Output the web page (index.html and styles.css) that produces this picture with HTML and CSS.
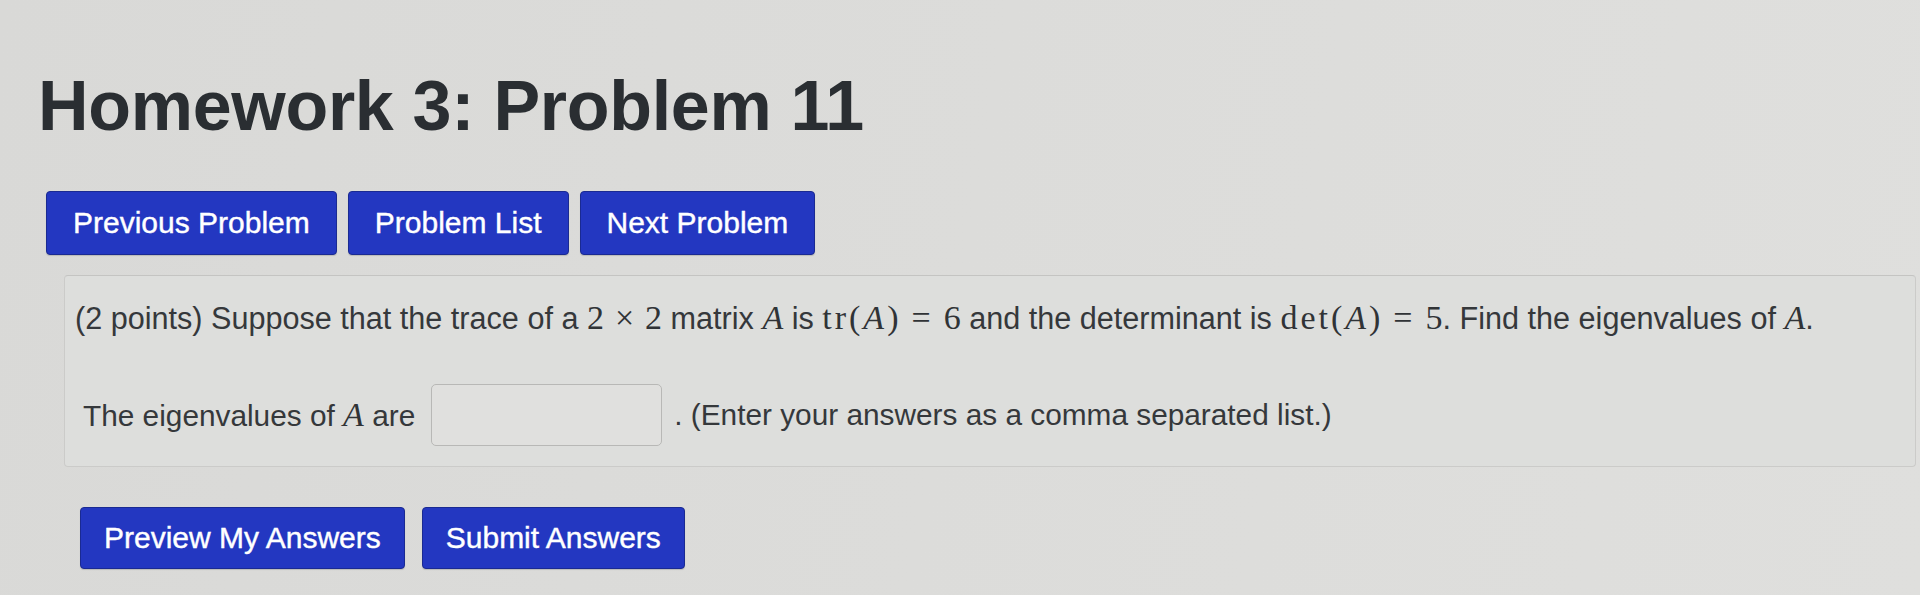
FILE: index.html
```html
<!DOCTYPE html>
<html lang="en">
<head>
<meta charset="utf-8">
<title>Homework 3: Problem 11</title>
<link rel="stylesheet" href="styles.css">
</head>
<body>
<div class="page">
  <h1 class="title">Homework 3: Problem 11</h1>
  <nav class="nav">
    <a class="btn btn-nav" href="#">Previous Problem</a>
    <a class="btn btn-nav" href="#">Problem List</a>
    <a class="btn btn-nav" href="#">Next Problem</a>
  </nav>
  <div class="problem">
    <p class="question">(2 points) Suppose that the trace of a <span class="m">2<span class="op op-bin">×</span>2</span> matrix <span class="m"><i>A</i></span> is <span class="m">tr(<i>A</i>)<span class="op">=</span>6</span> and the determinant is <span class="m">det(<i>A</i>)<span class="op">=</span>5</span>. Find the eigenvalues of <span class="m"><i>A</i></span>.</p>
    <div class="answer">
      <span class="label">The eigenvalues of <span class="m"><i>A</i></span> are</span>
      <input class="ans-input" type="text" aria-label="answer">
      <span class="hint">. (Enter your answers as a comma separated list.)</span>
    </div>
  </div>
  <div class="submit-row">
    <button class="btn btn-submit" type="button">Preview My Answers</button>
    <button class="btn btn-submit" type="button">Submit Answers</button>
  </div>
</div>
</body>
</html>
```

FILE: styles.css
```css
html, body {
  margin: 0;
  padding: 0;
}

body {
  background: linear-gradient(100deg, #d9d9d7 0%, #dcdcda 50%, #dfdfdd 100%);
  font-family: "Liberation Sans", Arial, sans-serif;
  color: #35383b;
  height: 595px;
  overflow: hidden;
}

.page {
  padding: 66px 0 0 38px;
}

.title {
  margin: 0;
  font-size: 70px;
  line-height: 80px;
  font-weight: bold;
  color: #2a2e32;
  letter-spacing: -0.3px;
}

.nav {
  display: flex;
  gap: 11px;
  margin: 45px 0 0 8px;
}

.btn {
  display: inline-flex;
  align-items: center;
  justify-content: center;
  box-sizing: border-box;
  font-family: "Liberation Sans", Arial, sans-serif;
  font-size: 30px;
  color: #ffffff;
  -webkit-text-stroke: 0.4px #ffffff;
  text-decoration: none;
  background: #2337c1;
  border: 1px solid #1a2a92;
  border-radius: 4px;
  box-shadow: 0 1px 1px rgba(0, 0, 0, 0.15);
}

.btn-nav {
  height: 64px;
  padding: 0 26px;
}

.problem {
  margin: 20px 4px 0 26px;
  padding: 20px 10px 20px 10px;
  background: #dddedc;
  border: 1px solid #cbcbc9;
  border-top-color: #c4c4c2;
  border-radius: 4px;
}

.question {
  margin: 0;
  font-size: 30.6px;
  line-height: 44px;
  white-space: nowrap;
}

.m {
  font-family: "Liberation Serif", "Times New Roman", serif;
  font-size: 34px;
  letter-spacing: 3px;
  margin-right: -3px;
  color: #303336;
}

.m i {
  font-style: italic;
}

.op {
  margin: 0 10px;
}

.op-bin {
  margin: 0 8px;
}

.answer {
  display: flex;
  align-items: center;
  margin: 44px 0 0 8px;
  font-size: 29.8px;
  line-height: 44px;
}

.ans-input {
  box-sizing: border-box;
  width: 231px;
  height: 62px;
  margin: 0 12px 0 16px;
  background: #e0e0de;
  border: 1px solid #b8b8b6;
  border-radius: 5px;
}

.submit-row {
  display: flex;
  gap: 17px;
  margin: 40px 0 0 42px;
}

.btn-submit {
  height: 62px;
  padding: 0 23px;
}
```
